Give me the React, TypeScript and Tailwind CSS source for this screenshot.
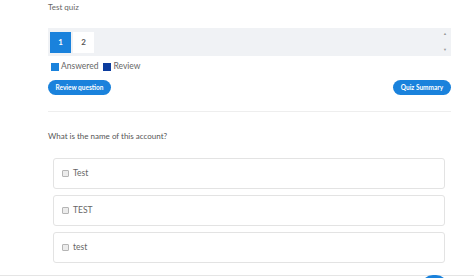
import React from "react";

const Option = ({ label }: { label: string }) => (
  <div className="flex h-[31px] items-center rounded-[3px] border border-[#e3e3e3] bg-white pl-[8px]">
    <span className="box-border block h-[7px] w-[7px] rounded-[1px] border border-[#b5b5b5] bg-[#ececec]" />
    <span className="ml-[4px] text-[8.5px] text-[#666]">{label}</span>
  </div>
);

export default function App() {
  return (
    <div className="relative h-[278px] w-[474px] overflow-hidden bg-white" style={{ fontFamily: "Lato, 'Liberation Sans', sans-serif" }}>
      <div className="ml-[48px] w-[403px]">
        <div className="pt-[1px] text-[8px] leading-[12px] text-[#666]">Test quiz</div>
        <div className="mt-[15px] flex h-[28px] items-center justify-between bg-[#f0f2f5] pl-[2px] pr-[4px]">
          <div className="flex gap-[2px]">
            <div className="flex h-[21px] w-[21px] items-center justify-center bg-[#1a82dc] text-[8px] font-bold text-white">1</div>
            <div className="flex h-[21px] w-[21px] items-center justify-center bg-white text-[8px] font-bold text-[#555]">2</div>
          </div>
          <div className="flex h-full flex-col justify-between py-[4px] text-[4px] leading-[4px] text-[#999]">
            <span>▲</span>
            <span>▼</span>
          </div>
        </div>
        <div className="mt-[6px] flex h-[9px] items-center text-[8.5px] text-[#666]">
          <span className="ml-[3px] block h-[8px] w-[8px] bg-[#1a82dc]" />
          <span className="ml-[2px]">Answered</span>
          <span className="ml-[5px] block h-[8px] w-[8px] bg-[#0c3c9e]" />
          <span className="ml-[2px]">Review</span>
        </div>
        <div className="mt-[9px] flex items-center justify-between">
          <div className="flex h-[15px] w-[63px] items-center justify-center rounded-full bg-[#1a82dc] text-[6.5px] font-bold text-white">Review question</div>
          <div className="flex h-[15px] w-[58px] items-center justify-center rounded-full bg-[#1a82dc] text-[6.5px] font-bold text-white">Quiz Summary</div>
        </div>
        <div className="mt-[16px] h-px bg-[#eeeeee]" />
        <div className="mt-[18px] text-[8px] leading-[12px] text-[#555]">What is the name of this account?</div>
        <div className="ml-[5px] mr-[6px] mt-[16px] flex flex-col gap-[6px]">
          <Option label="Test" />
          <Option label="TEST" />
          <Option label="test" />
        </div>
      </div>
      <div className="absolute left-0 top-[275px] h-px w-full bg-[#e5e5e5]" />
      <div className="absolute left-[421px] top-[275px] h-[12px] w-[27px] rounded-t-full bg-[#1a82dc]" />
    </div>
  );
}
